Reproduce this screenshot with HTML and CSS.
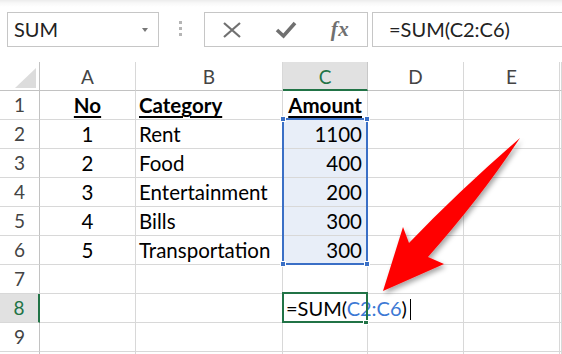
FILE: index.html
```html
<!DOCTYPE html>
<html>
<head>
<meta charset="utf-8">
<link rel="stylesheet" href="styles.css">
</head>
<body>
<div class="app">
  <div class="fbar">
    <div class="namebox"><span>SUM</span><span class="caret"></span></div>
    <div class="grip"><i></i><i></i><i></i></div>
    <div class="btns">
      <span class="slot"><svg width="20" height="16" viewBox="0 0 20 16"><path d="M2 1 L18 15 M18 1 L2 15" stroke="#707070" stroke-width="2.2" fill="none"/></svg></span>
      <span class="slot"><svg width="22" height="18" viewBox="0 0 22 18"><path d="M2 9 L8.5 15 L20 2" stroke="#707070" stroke-width="3.6" fill="none"/></svg></span>
      <span class="slot fx">fx</span>
    </div>
    <div class="formula">=SUM(C2:C6)</div>
  </div>

  <div class="sheet">
    <div class="corner"><span class="tri"></span></div>
    <div class="ch">A</div>
    <div class="ch">B</div>
    <div class="ch sel">C</div>
    <div class="ch">D</div>
    <div class="ch">E</div>
    <div class="ch"></div>

    <div class="rh">1</div>
    <div class="c center"><b class="hd">No</b></div>
    <div class="c left"><b class="hd">Category</b></div>
    <div class="c right"><b class="hd">Amount</b></div>
    <div class="c"></div><div class="c"></div><div class="c"></div>

    <div class="rh">2</div>
    <div class="c center">1</div>
    <div class="c left">Rent</div>
    <div class="c right rng">1100</div>
    <div class="c"></div><div class="c"></div><div class="c"></div>

    <div class="rh">3</div>
    <div class="c center">2</div>
    <div class="c left">Food</div>
    <div class="c right rng">400</div>
    <div class="c"></div><div class="c"></div><div class="c"></div>

    <div class="rh">4</div>
    <div class="c center">3</div>
    <div class="c left">Entertainment</div>
    <div class="c right rng">200</div>
    <div class="c"></div><div class="c"></div><div class="c"></div>

    <div class="rh">5</div>
    <div class="c center">4</div>
    <div class="c left">Bills</div>
    <div class="c right rng">300</div>
    <div class="c"></div><div class="c"></div><div class="c"></div>

    <div class="rh">6</div>
    <div class="c center">5</div>
    <div class="c left">Transportation</div>
    <div class="c right rng">300</div>
    <div class="c"></div><div class="c"></div><div class="c"></div>

    <div class="rh">7</div>
    <div class="c"></div><div class="c"></div><div class="c"></div>
    <div class="c"></div><div class="c"></div><div class="c"></div>

    <div class="rh act">8</div>
    <div class="c"></div><div class="c"></div>
    <div class="c left edit">=SUM(<span class="ref">C2:C6</span>)<span class="cursor"></span></div>
    <div class="c"></div><div class="c"></div><div class="c"></div>

    <div class="rh">9</div>
    <div class="c"></div><div class="c"></div><div class="c"></div>
    <div class="c"></div><div class="c"></div><div class="c"></div>

    <div class="rh"></div>
    <div class="c"></div><div class="c"></div><div class="c"></div>
    <div class="c"></div><div class="c"></div><div class="c"></div>

    <div class="range"><i class="h tl"></i><i class="h tr"></i><i class="h bl"></i><i class="h br"></i></div>
    <div class="active"><i class="fill"></i></div>
  </div>

  <svg class="arrow" width="562" height="354" viewBox="0 0 562 354">
    <defs>
      <filter id="sh" x="-20%" y="-20%" width="140%" height="140%">
        <feDropShadow dx="2" dy="3" stdDeviation="2.5" flood-color="#000" flood-opacity="0.35"/>
      </filter>
    </defs>
    <path d="M520 138 Q 458 192 409 243 L 403 227 L 383 291 L 444 264 L 428 257 Q 482 196 520 138 Z" fill="#ff0000" filter="url(#sh)"/>
  </svg>
</div>
</body>
</html>
```

FILE: styles.css
```css
* { box-sizing: border-box; }
html, body { margin: 0; padding: 0; background: #fff; }
body { width: 562px; height: 354px; overflow: hidden; font-family: "Lato", sans-serif; color: #000; }

.app { position: relative; width: 562px; height: 354px; overflow: hidden; }

.fbar {
  height: 62px;
  display: flex;
  align-items: flex-start;
  padding: 12px 0 0 7px;
  background: linear-gradient(#ececec 0, #f8f8f8 3px, #fff 7px);
}
.namebox {
  width: 152px; height: 35px;
  border: 1px solid #c6c6c6;
  background: #fff;
  display: flex; align-items: center; justify-content: space-between;
  padding: 0 10px 0 6px;
  font-size: 20px; color: #222;
  line-height: 33px;
}
.caret {
  width: 0; height: 0;
  border-left: 3.5px solid transparent;
  border-right: 3.5px solid transparent;
  border-top: 4px solid #777;
  margin-top: 1px;
}
.grip {
  width: 45px; height: 35px;
  display: flex; flex-direction: column; gap: 3px;
  padding: 9px 0 0 20px;
}
.grip i { display: block; width: 3px; height: 3px; background: #b5b5b5; }
.btns {
  width: 164px; height: 35px;
  border: 1px solid #c6c6c6;
  background: #fff;
  display: flex; align-items: center;
}
.slot { width: 54px; display: flex; justify-content: center; align-items: center; height: 33px; }
.fx {
  font-family: "Liberation Serif", serif;
  font-style: italic; font-weight: bold;
  font-size: 21px; color: #707070;
  letter-spacing: 0.5px;
  padding-bottom: 1px;
}
.formula {
  margin-left: 4px;
  flex: 1; height: 35px;
  border: 1px solid #c6c6c6; border-right: none;
  padding-left: 16px;
  font-size: 20px; line-height: 33px; color: #222;
  white-space: nowrap;
}

.sheet {
  position: relative;
  display: grid;
  grid-template-columns: 40px 96px 147px 85px 96px 96px 1fr;
  grid-auto-rows: 29px;
}
.corner, .ch, .rh, .c {
  border-right: 1px solid #d8d8d8;
  border-bottom: 1px solid #d8d8d8;
}
.corner { position: relative; border-right-color: #c2c2c2; border-bottom-color: #c2c2c2; }
.tri {
  position: absolute; right: 3px; bottom: 2px;
  width: 0; height: 0;
  border-left: 21px solid transparent;
  border-bottom: 20px solid #dcdcdc;
}
.ch {
  text-align: center;
  font-size: 19px; line-height: 28px; padding-top: 1px;
  color: #444;
  border-bottom-color: #c2c2c2;
}
.ch.sel { background: #e1e1e1; color: #217346; border-bottom: 2px solid #217346; border-right-color: #c8c8c8; }
.rh {
  text-align: center;
  font-size: 19px; line-height: 28px;
  color: #444;
  border-right-color: #c2c2c2;
}
.rh.act { background: #e1e1e1; color: #217346; border-right: 2px solid #217346; }

.c { font-size: 20.5px; line-height: 28px; white-space: nowrap; }
.center { text-align: center; }
.left { padding-left: 3px; }
.right { text-align: right; padding-right: 5px; }
.rng { background: #e8eef8; }
.hd { font-weight: bold; text-decoration: underline; text-decoration-thickness: 2px; text-underline-offset: 3px; }

.edit { position: relative; z-index: 2; overflow: visible; padding-left: 3px; font-size: 20px; }
.ref { color: #3b78d4; }
.cursor { display: inline-block; width: 1px; height: 21px; background: #000; margin-left: 3px; vertical-align: -4px; }

.range {
  position: absolute; left: 282px; top: 56px; width: 86px; height: 147px;
  border: 2px solid #3a6fc6;
  z-index: 3;
}
.h { position: absolute; width: 6px; height: 6px; background: #3a6fc6; border: 1px solid #fff; }
.tl { left: -4px; top: -4px; }
.tr { right: -4px; top: -4px; }
.bl { left: -4px; bottom: -4px; }
.br { right: -4px; bottom: -4px; }

.active {
  position: absolute; left: 282px; top: 230px; width: 86px; height: 31px;
  border: 2px solid #217346;
  z-index: 3;
}
.fill { position: absolute; right: -3px; bottom: -4px; width: 6px; height: 5px; background: #217346; border: 1px solid #fff; }

.arrow { position: absolute; left: 0; top: 0; z-index: 5; pointer-events: none; }
```
